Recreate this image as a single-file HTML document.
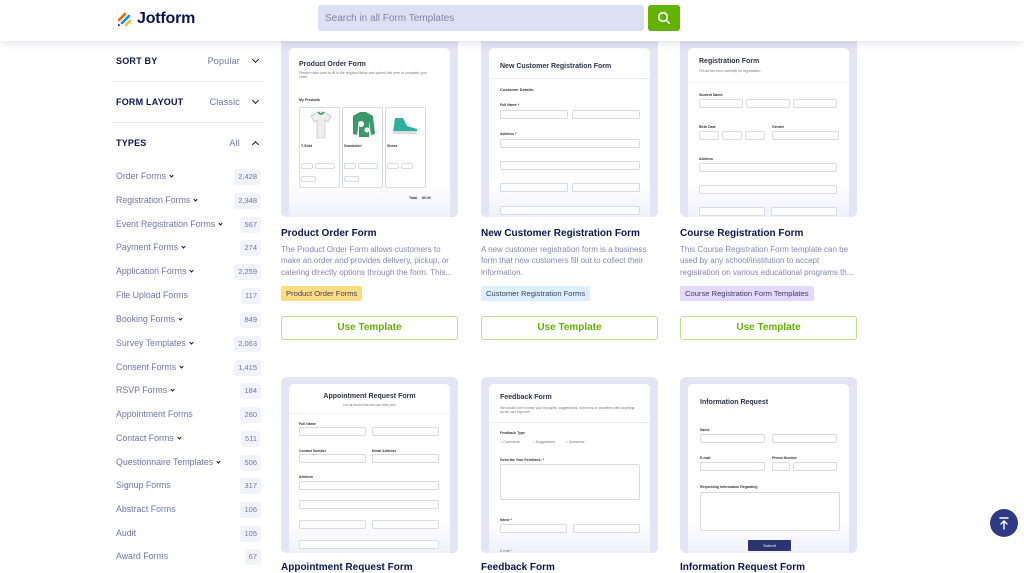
<!DOCTYPE html>
<html><head><meta charset="utf-8"><style>
*{box-sizing:border-box;margin:0;padding:0}
body{width:1024px;height:573px;overflow:hidden;background:#fff;font-family:"Liberation Sans",sans-serif;position:relative;color:#0a1551}
.a{position:absolute}
.hdr{left:0;top:0;width:1024px;height:41px;background:#fff;box-shadow:0 2px 8px rgba(10,21,81,.12);z-index:5}
.side .row{position:absolute;left:116px;width:146px;font-size:9px;font-weight:bold;letter-spacing:.2px}
.side .row span{position:absolute;right:22px;font-weight:normal;color:#6f76a7}
.chev{position:absolute;right:4px;top:1px;width:5px;height:5px;border-right:1.6px solid #0a1551;border-bottom:1.6px solid #0a1551;transform:rotate(45deg)}
.hr{position:absolute;left:112px;width:152px;height:1px;background:#e8e9f3}
.it{position:absolute;left:116px;font-size:8.8px;color:#6f76a7}
.it i{display:inline-block;width:3px;height:3px;border-right:1.2px solid #0a1551;border-bottom:1.2px solid #0a1551;transform:rotate(45deg);margin:0 0 2px 4px}
.cnt{position:absolute;right:763px;font-size:7.5px;color:#6f76a7;background:#f1f2fa;border-radius:3px;padding:4px 4px;line-height:8px}
.pv{position:absolute;width:177px;background:#e3e4f4;border-radius:0 0 6px 6px;overflow:hidden}
.pp{position:absolute;left:8px;right:8px;top:7px;bottom:0;background:linear-gradient(#fff 80%,#f0f0fa);border-radius:5px 5px 0 0;overflow:hidden}
.pp .t{position:absolute;font-size:7px;font-weight:bold;color:#2c3345}
.pp .s{position:absolute;font-size:3.5px;color:#777}
.pp .l{position:absolute;font-size:3.5px;color:#333;font-weight:bold}
.pp .f{position:absolute;border:1px solid #d8dae5;border-radius:2px;height:9px;background:#fff}
.pp .hl{position:absolute;left:0;right:0;height:1px;background:#eee}
.ct{position:absolute;font-size:10px;font-weight:bold;color:#0a1551}
.cd{position:absolute;width:180px;font-size:8px;line-height:11.3px;color:#8389b0}
.tg{position:absolute;font-size:7.6px;color:#3a3f5c;border-radius:2px;padding:0 5px;height:15px;line-height:15px}
.bt{position:absolute;width:177px;height:24px;border:1.5px solid #b8df8c;border-radius:3px;color:#64b200;font-size:10px;font-weight:bold;text-align:center;line-height:21px}
</style></head><body>
<div class="a hdr">
 <svg class="a" style="left:117px;top:11px" width="16" height="16" viewBox="0 0 16 16"><path d="M2 9l6-6" stroke="#ff6100" stroke-width="2.6" stroke-linecap="round"/><path d="M5 12l7-7" stroke="#0099ff" stroke-width="2.6" stroke-linecap="round"/><path d="M9 14l4-4" stroke="#ffb629" stroke-width="2.6" stroke-linecap="round"/><path d="M1 15l2.5-.5L1.5 12.5z" fill="#0a1551"/></svg>
 <div class="a" style="left:137px;top:10px;font-size:16px;font-weight:bold;color:#0a1551;letter-spacing:-.2px">Jotform</div>
 <div class="a" style="left:318px;top:5px;width:326px;height:26px;background:#dde0f3;border-radius:3px;font-size:10px;color:#7e84a8;padding:8px 7px">Search in all Form Templates</div>
 <div class="a" style="left:648px;top:5px;width:32px;height:26px;background:#64b200;border-radius:3px">
  <svg class="a" style="left:9px;top:6px" width="14" height="14" viewBox="0 0 14 14"><circle cx="6" cy="6" r="4.3" fill="none" stroke="#fff" stroke-width="1.6"/><path d="M9.2 9.2l3 3" stroke="#fff" stroke-width="1.6" stroke-linecap="round"/></svg>
 </div>
</div>
<div class="side">
 <div class="row" style="top:56px">SORT BY<span>Popular</span><b class="chev"></b></div>
 <div class="hr" style="top:81px"></div>
 <div class="row" style="top:97px">FORM LAYOUT<span>Classic</span><b class="chev"></b></div>
 <div class="hr" style="top:122px"></div>
 <div class="row" style="top:138px">TYPES<span>All</span><b class="chev" style="transform:rotate(225deg);top:4px"></b></div>
</div>
<div class="it" style="top:171px">Order Forms<i></i></div><div class="cnt" style="top:169px">2,428</div>
<div class="it" style="top:195px">Registration Forms<i></i></div><div class="cnt" style="top:193px">2,348</div>
<div class="it" style="top:219px">Event Registration Forms<i></i></div><div class="cnt" style="top:217px">567</div>
<div class="it" style="top:242px">Payment Forms<i></i></div><div class="cnt" style="top:240px">274</div>
<div class="it" style="top:266px">Application Forms<i></i></div><div class="cnt" style="top:264px">2,259</div>
<div class="it" style="top:290px">File Upload Forms</div><div class="cnt" style="top:288px">117</div>
<div class="it" style="top:314px">Booking Forms<i></i></div><div class="cnt" style="top:312px">849</div>
<div class="it" style="top:338px">Survey Templates<i></i></div><div class="cnt" style="top:336px">2,063</div>
<div class="it" style="top:362px">Consent Forms<i></i></div><div class="cnt" style="top:360px">1,415</div>
<div class="it" style="top:385px">RSVP Forms<i></i></div><div class="cnt" style="top:383px">184</div>
<div class="it" style="top:409px">Appointment Forms</div><div class="cnt" style="top:407px">260</div>
<div class="it" style="top:433px">Contact Forms<i></i></div><div class="cnt" style="top:431px">511</div>
<div class="it" style="top:457px">Questionnaire Templates<i></i></div><div class="cnt" style="top:455px">506</div>
<div class="it" style="top:480px">Signup Forms</div><div class="cnt" style="top:478px">317</div>
<div class="it" style="top:504px">Abstract Forms</div><div class="cnt" style="top:502px">106</div>
<div class="it" style="top:528px">Audit</div><div class="cnt" style="top:526px">105</div>
<div class="it" style="top:551px">Award Forms</div><div class="cnt" style="top:549px">67</div>

<div class="pv" style="left:281px;top:41px;height:176px"><div class="pp">
 <div class="t" style="left:10px;top:13px">Product Order Form</div>
 <div class="s" style="left:10px;top:23px;width:130px">Please make sure to fill in the required fields and submit this form to complete your order.</div>
 <div class="l" style="left:10px;top:50px">My Products</div>
 <div class="f" style="left:10px;top:59px;width:41px;height:81px"></div><div class="f" style="left:53px;top:59px;width:41px;height:81px"></div><div class="f" style="left:96px;top:59px;width:41px;height:81px"></div>
 <svg class="a" style="left:18px;top:62px" width="28" height="30"><path d="M4 6l7-4h6l7 4-3 6-3-2v18H10V10l-3 2z" fill="#eee" stroke="#bbb" stroke-width=".6"/><path d="M11 2q3 4 6 0" fill="none" stroke="#2a9a5a" stroke-width="1.5"/></svg>
 <svg class="a" style="left:60px;top:62px" width="28" height="30"><path d="M4 6l7-4h6l7 4 2 18-4 1-2-14v16H10V11l-2 14-4-1z" fill="#3a9a6a"/><circle cx="12" cy="14" r="3" fill="#fff"/><circle cx="18" cy="20" r="2.5" fill="#fff"/></svg>
 <svg class="a" style="left:102px;top:66px" width="30" height="22"><path d="M4 4h8l4 8 10 3v4H2z" fill="#2bb0a0"/><path d="M2 17h24v3H2z" fill="#ddd"/></svg>
 <div class="l" style="left:12px;top:96px">T-Shirt</div><div class="l" style="left:55px;top:96px">Sweatshirt</div><div class="l" style="left:98px;top:96px">Shoes</div>
 <div class="f" style="left:12px;top:115px;width:12px;height:6px"></div><div class="f" style="left:26px;top:115px;width:20px;height:6px"></div>
 <div class="f" style="left:55px;top:115px;width:12px;height:6px"></div><div class="f" style="left:69px;top:115px;width:20px;height:6px"></div>
 <div class="f" style="left:98px;top:115px;width:12px;height:6px"></div><div class="f" style="left:112px;top:115px;width:12px;height:6px"></div>
 <div class="f" style="left:12px;top:128px;width:15px;height:6px"></div><div class="f" style="left:55px;top:128px;width:15px;height:6px"></div>
 <div class="l" style="left:120px;top:148px">Total &nbsp;&nbsp;&nbsp; $0.00</div>
</div></div>
<div class="pv" style="left:481px;top:41px;height:176px"><div class="pp">
 <div class="t" style="left:11px;top:15px">New Customer Registration Form</div>
 <div class="hl" style="top:30px"></div>
 <div class="l" style="left:11px;top:39px;font-size:4px">Customer Details:</div>
 <div class="l" style="left:11px;top:55px">Full Name *</div>
 <div class="f" style="left:11px;top:62px;width:68px"></div><div class="f" style="left:83px;top:62px;width:68px"></div>
 <div class="l" style="left:11px;top:84px">Address *</div>
 <div class="f" style="left:11px;top:91px;width:140px"></div>
 <div class="f" style="left:11px;top:113px;width:140px"></div>
 <div class="f" style="left:11px;top:135px;width:68px"></div><div class="f" style="left:83px;top:135px;width:68px"></div>
 <div class="f" style="left:11px;top:158px;width:140px"></div>
</div></div>
<div class="pv" style="left:680px;top:41px;height:176px"><div class="pp">
 <div class="t" style="left:11px;top:10px">Registration Form</div>
 <div class="s" style="left:11px;top:21px">Fill out the form carefully for registration</div>
 <div class="hl" style="top:34px"></div>
 <div class="l" style="left:11px;top:45px">Student Name</div>
 <div class="f" style="left:11px;top:51px;width:44px"></div><div class="f" style="left:58px;top:51px;width:44px"></div><div class="f" style="left:105px;top:51px;width:44px"></div>
 <div class="l" style="left:11px;top:77px">Birth Date</div><div class="l" style="left:84px;top:77px">Gender</div>
 <div class="f" style="left:11px;top:83px;width:20px"></div><div class="f" style="left:34px;top:83px;width:20px"></div><div class="f" style="left:57px;top:83px;width:20px"></div><div class="f" style="left:84px;top:83px;width:67px"></div>
 <div class="l" style="left:11px;top:109px">Address</div>
 <div class="f" style="left:11px;top:115px;width:138px"></div>
 <div class="f" style="left:11px;top:137px;width:138px"></div>
 <div class="f" style="left:11px;top:159px;width:66px"></div><div class="f" style="left:83px;top:159px;width:66px"></div>
</div></div>

<div class="ct" style="left:281px;top:228px">Product Order Form</div>
<div class="cd" style="left:281px;top:244px">The Product Order Form allows customers to make an order and provides delivery, pickup, or catering directly options through the form. This...</div>
<div class="tg" style="left:281px;top:286px;background:#ffdc82">Product Order Forms</div>
<div class="bt" style="left:281px;top:316px">Use Template</div>

<div class="ct" style="left:481px;top:228px">New Customer Registration Form</div>
<div class="cd" style="left:481px;top:244px">A new customer registration form is a business form that new customers fill out to collect their information.</div>
<div class="tg" style="left:481px;top:286px;background:#dbefff">Customer Registration Forms</div>
<div class="bt" style="left:481px;top:316px">Use Template</div>

<div class="ct" style="left:680px;top:228px">Course Registration Form</div>
<div class="cd" style="left:680px;top:244px">This Course Registration Form template can be used by any school/institution to accept registration on various educational programs th...</div>
<div class="tg" style="left:680px;top:286px;background:#e5d8ff">Course Registration Form Templates</div>
<div class="bt" style="left:680px;top:316px">Use Template</div>

<div class="pv" style="left:281px;top:377px;height:176px;border-radius:6px"><div class="pp">
 <div class="t" style="left:0;right:0;text-align:center;top:9px">Appointment Request Form</div>
 <div class="s" style="left:0;right:0;text-align:center;top:19px">Let us know how we can help you!</div>
 <div class="hl" style="top:29px"></div>
 <div class="l" style="left:10px;top:38px">Full Name</div>
 <div class="f" style="left:10px;top:43px;width:67px"></div><div class="f" style="left:83px;top:43px;width:67px"></div>
 <div class="l" style="left:10px;top:65px">Contact Number</div><div class="l" style="left:83px;top:65px">Email Address</div>
 <div class="f" style="left:10px;top:70px;width:67px"></div><div class="f" style="left:83px;top:70px;width:67px"></div>
 <div class="l" style="left:10px;top:91px">Address</div>
 <div class="f" style="left:10px;top:97px;width:140px"></div>
 <div class="f" style="left:10px;top:116px;width:140px"></div>
 <div class="f" style="left:10px;top:136px;width:67px"></div><div class="f" style="left:83px;top:136px;width:67px"></div>
 <div class="f" style="left:10px;top:156px;width:140px"></div>
</div></div>
<div class="pv" style="left:481px;top:377px;height:176px;border-radius:6px"><div class="pp">
 <div class="t" style="left:11px;top:10px">Feedback Form</div>
 <div class="s" style="left:11px;top:22px;width:135px">We would love to hear your thoughts, suggestions, concerns or problems with anything so we can improve!</div>
 <div class="hl" style="top:38px"></div>
 <div class="l" style="left:11px;top:47px">Feedback Type</div>
 <div class="s" style="left:11px;top:56px">○ Comments &nbsp;&nbsp;&nbsp;&nbsp;&nbsp;&nbsp;&nbsp;&nbsp;&nbsp;&nbsp;&nbsp; ○ Suggestions &nbsp;&nbsp;&nbsp;&nbsp;&nbsp;&nbsp;&nbsp;&nbsp;&nbsp; ○ Questions</div>
 <div class="l" style="left:11px;top:74px">Describe Your Feedback: *</div>
 <div class="f" style="left:11px;top:80px;width:140px;height:36px"></div>
 <div class="l" style="left:11px;top:134px">Name *</div>
 <div class="f" style="left:11px;top:140px;width:67px"></div><div class="f" style="left:84px;top:140px;width:67px"></div>
 <div class="s" style="left:11px;top:165px">E-mail *</div>
</div></div>
<div class="pv" style="left:680px;top:377px;height:176px;border-radius:6px"><div class="pp">
 <div class="t" style="left:12px;top:15px">Information Request</div>
 <div class="l" style="left:12px;top:44px">Name</div>
 <div class="f" style="left:12px;top:50px;width:65px"></div><div class="f" style="left:84px;top:50px;width:65px"></div>
 <div class="l" style="left:12px;top:72px">E-mail</div><div class="l" style="left:84px;top:72px">Phone Number</div>
 <div class="f" style="left:12px;top:78px;width:65px"></div><div class="f" style="left:84px;top:78px;width:18px"></div><div class="f" style="left:105px;top:78px;width:44px"></div>
 <div class="l" style="left:12px;top:101px">Requesting Information Regarding</div>
 <div class="f" style="left:12px;top:108px;width:140px;height:39px"></div>
 <div class="a" style="left:60px;top:156px;width:43px;height:11px;background:#2b3470;border-radius:1px;font-size:4px;color:#fff;text-align:center;line-height:11px">Submit</div>
</div></div>

<div class="ct" style="left:281px;top:562px">Appointment Request Form</div>
<div class="ct" style="left:481px;top:562px">Feedback Form</div>
<div class="ct" style="left:680px;top:562px">Information Request Form</div>

<div class="a" style="left:990px;top:509px;width:28px;height:28px;border-radius:50%;background:#2f3a85">
 <svg class="a" style="left:7px;top:7px" width="14" height="14" viewBox="0 0 14 14"><path d="M3 2h8M7 5v8M4 8l3-3 3 3" fill="none" stroke="#fff" stroke-width="1.4" stroke-linecap="round"/></svg>
</div>
</body></html>
